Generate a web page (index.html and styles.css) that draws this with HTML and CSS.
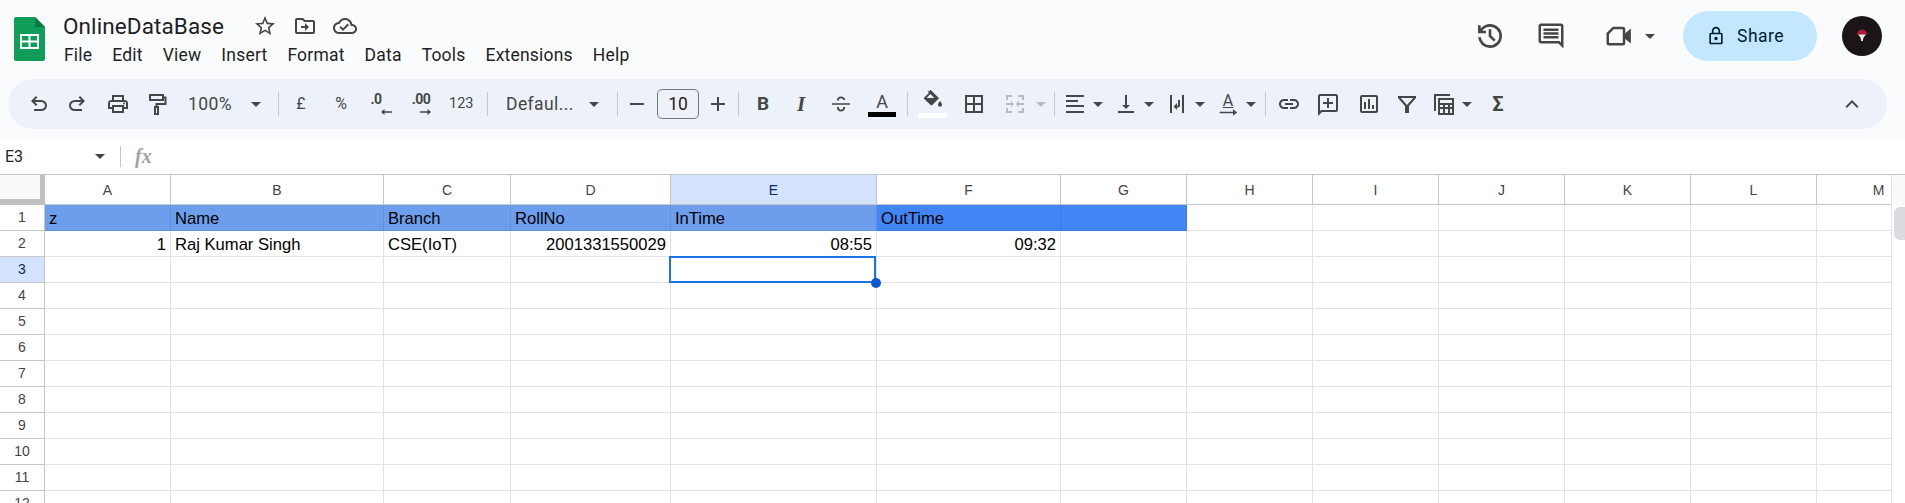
FILE: index.html
```html
<!DOCTYPE html>
<html lang="en">
<head>
<meta charset="utf-8">
<title>OnlineDataBase - Google Sheets</title>
<link rel="stylesheet" href="styles.css">
</head>
<body>
<div class="chrome">
  <header class="top">
    <svg class="logo" viewBox="0 0 31 44"><path class="logo-body" d="M2 0h19l10 10v32a2 2 0 0 1-2 2H2a2 2 0 0 1-2-2V2a2 2 0 0 1 2-2z"/><path class="logo-fold" d="M21 0l10 10H21z"/><path class="logo-grid" d="M6 17h19v15H6zm2 2v4.500h6.500V19zm8.500 0v4.500H23V19zM8 25.500V30h6.500v-4.500zm8.500 0V30H23v-4.500z"/></svg>
    <div class="doc">
      <div class="title-row">
        <span class="title">OnlineDataBase</span>
        <svg class="ic g28" viewBox="0 0 24 24"><path d="M22 9.240l-7.190-.620L12 2 9.190 8.630 2 9.240l5.460 4.730L5.820 21 12 17.270 18.180 21l-1.630-7.030L22 9.240zM12 15.400l-3.760 2.270 1-4.280-3.320-2.880 4.380-.380L12 6.100l1.710 4.040 4.380.380-3.320 2.880 1 4.280L12 15.400z"/></svg>
        <svg class="ic g16" viewBox="0 0 24 24"><path d="M20 6h-8l-2-2H4c-1.100 0-1.990.900-1.990 2L2 18c0 1.100.900 2 2 2h16c1.100 0 2-.900 2-2V8c0-1.100-.900-2-2-2zm0 12H4V6h5.170l2 2H20v10zm-8-4H8v-2h4V9l4 4-4 4v-3z"/></svg>
        <svg class="ic g16" viewBox="0 0 24 24"><path d="M19.350 10.040C18.670 6.590 15.640 4 12 4 9.110 4 6.600 5.640 5.350 8.040 2.340 8.360 0 10.910 0 14c0 3.310 2.690 6 6 6h13c2.760 0 5-2.240 5-5 0-2.640-2.050-4.780-4.650-4.960zM19 18H6c-2.210 0-4-1.790-4-4 0-2.050 1.530-3.760 3.560-3.970l1.070-.110.500-.950C8.080 7.140 9.940 6 12 6c2.620 0 4.880 1.860 5.390 4.430l.300 1.500 1.530.110c1.560.100 2.780 1.410 2.780 2.960 0 1.650-1.350 3-3 3zm-9-3.820l-2.090-2.090L6.500 13.500 10 17l6.010-6.010-1.410-1.410z"/></svg>
      </div>
      <nav class="menu"><span>File</span><span>Edit</span><span>View</span><span>Insert</span><span>Format</span><span>Data</span><span>Tools</span><span>Extensions</span><span>Help</span></nav>
    </div>
    <div class="actions">
      <svg class="big" viewBox="0 0 24 24"><path d="M12 21q-3.450 0-6.012-2.288T3.050 13h2.050q.350 2.600 2.313 4.300T12 19q2.925 0 4.963-2.037T19 12q0-2.925-2.037-4.963T12 5q-1.725 0-3.225.800T6.250 8H9v2H3V4h2v2.350q1.275-1.600 3.113-2.475T12 3q3.750 0 6.375 2.625T21 12q0 3.750-2.625 6.375T12 21Zm2.800-4.800L11 12.400V7h2v4.600l3.200 3.200-1.400 1.400Z"/></svg>
      <svg class="mid g30" viewBox="0 0 24 24"><path d="M21.990 4c0-1.100-.890-2-1.990-2H4c-1.100 0-2 .900-2 2v12c0 1.100.900 2 2 2h14l4 4-.010-18zM20 4v13.170L18.830 16H4V4h16zM6 12h12v2H6zm0-3h12v2H6zm0-3h12v2H6z"/></svg>
      <svg class="mid g38" viewBox="0 0 24 24"><path class="stroke" d="M7.500 5.500H15a1 1 0 0 1 1 1v11a1 1 0 0 1-1 1H4a1 1 0 0 1-1-1V10z"/><path d="M16 10.500l5.500-4.500v12L16 13.500z"/></svg>
      <span class="caret g10"></span>
      <div class="share g27">
        <svg class="lock" viewBox="0 0 24 24"><path d="M18 8h-1V6c0-2.760-2.240-5-5-5S7 3.240 7 6v2H6c-1.100 0-2 .900-2 2v10c0 1.100.900 2 2 2h12c1.100 0 2-.900 2-2V10c0-1.100-.900-2-2-2zM9 6c0-1.660 1.340-3 3-3s3 1.340 3 3v2H9V6zm9 14H6V10h12v10zm-6-3c1.100 0 2-.900 2-2s-.900-2-2-2-2 .900-2 2 .900 2 2 2z"/></svg>
        <span>Share</span>
      </div>
      <svg class="avatar g25" viewBox="0 0 40 40"><circle cx="20" cy="20" r="20" fill="#1b1418"/><path d="M15 18.500a5 5 0 0 1 10 0z" fill="#b3173c"/><path d="M16 18.500h8l-2.500 3-.7 3.500h-1.600l-.7-3.500z" fill="#f3ece6"/></svg>
    </div>
  </header>

  <div class="toolbar">
    <svg class="ti" viewBox="0 0 24 24"><path d="M7 19v-2h7.100q1.575 0 2.737-1T18 13.500q0-1.500-1.163-2.500T14.100 10H7.800l2.600 2.600L9 14 4 9l5-5 1.400 1.400L7.800 8h6.300q2.425 0 4.163 1.575T20 13.500q0 2.350-1.737 3.925T14.100 19H7Z"/></svg>
    <svg class="ti g14 flip" viewBox="0 0 24 24"><path d="M7 19v-2h7.100q1.575 0 2.737-1T18 13.500q0-1.500-1.163-2.500T14.100 10H7.800l2.600 2.600L9 14 4 9l5-5 1.400 1.400L7.800 8h6.300q2.425 0 4.163 1.575T20 13.500q0 2.350-1.737 3.925T14.100 19H7Z"/></svg>
    <svg class="ti g17" viewBox="0 0 24 24"><path d="M19 8h-1V3H6v5H5c-1.660 0-3 1.340-3 3v6h4v4h12v-4h4v-6c0-1.660-1.340-3-3-3zM8 5h8v3H8V5zm8 12v2H8v-4h8v2zm2-2v-2H6v2H4v-4c0-.550.450-1 1-1h14c.550 0 1 .450 1 1v4h-2z"/><circle cx="18" cy="11.500" r="1"/></svg>
    <svg class="ti g15" viewBox="0 0 24 24"><path class="stroke" d="M5 3h13v5H5zM18 5.500h2.500V12H11.500v3M10 15h3v7h-3z"/></svg>
    <span class="tt zoom g19">100%</span>
    <span class="caret g16"></span>
    <span class="sep g16"></span>
    <span class="tx g10">£</span>
    <span class="tx pct g16">%</span>
    <span class="dec g16"><b class="dec-one">.0</b><svg viewBox="0 0 12 8"><path d="M12 3.200H4.500V1L1 4l3.500 3V4.800H12z"/></svg></span>
    <span class="dec g16"><b>.00</b><svg viewBox="0 0 12 8"><path d="M0 3.200h7.500V1L11 4 7.500 7V4.800H0z"/></svg></span>
    <span class="tx num g16">123</span>
    <span class="sep g14"></span>
    <span class="tt font g18">Defaul...</span>
    <span class="caret g16"></span>
    <span class="sep g17"></span>
    <svg class="ti g7" viewBox="0 0 24 24"><path d="M5 11h14v2H5z"/></svg>
    <span class="size g8">10</span>
    <svg class="ti g7" viewBox="0 0 24 24"><path d="M5 11h6V5h2v6h6v2h-6v6h-2v-6H5z"/></svg>
    <span class="sep g8"></span>
    <span class="tx bold g12">B</span>
    <span class="tx ital g14">I</span>
    <svg class="ti g16" viewBox="0 0 24 24"><path d="M3 11.200h18v1.600H3zM7.800 8.500C8 6 9.800 4.500 12 4.500s4 1.200 4.300 3.500h-2c-.2-1-1.100-1.700-2.300-1.700S9.900 7 9.800 8.500zM7.800 15h2c.1 1.500 1 2.700 2.200 2.700s2.100-1 2.200-2.700h2c-.2 3-2 4.500-4.200 4.500S8 18 7.800 15z"/></svg>
    <span class="color g17">A<i class="bar-black"></i></span>
    <span class="sep g13"></span>
    <span class="fill g12"><svg viewBox="0 0 24 20"><path d="M9.500 1l1.200-1.100 8.300 8.300-6.500 6.500a1.500 1.500 0 0 1-2.100 0L4.500 9.300a1.500 1.500 0 0 1 0-2.100L9 2.800 7.500 1.300zM10.400 4.100L6.600 8h7.700z"/><path d="M20 11s2 2.300 2 3.700a2 2 0 0 1-4 0c0-1.400 2-3.700 2-3.700z"/></svg><i class="bar-white"></i></span>
    <svg class="ti g18" viewBox="0 0 24 24"><path d="M3 3h18v18H3zm2 2v6h6V5zm8 0v6h6V5zM5 13v6h6v-6zm8 0v6h6v-6z"/></svg>
    <svg class="ti g17 off" viewBox="0 0 24 24"><path d="M3 3h6v2H5v3H3zM15 3h6v5h-2V5h-4zM3 16h2v3h4v2H3zM19 16h2v5h-6v-2h4zM3 11h5V9l3 3-3 3v-2H3zM21 11h-5V9l-3 3 3 3v-2h5z"/></svg>
    <span class="caret off-caret g8"></span>
    <span class="sep g7"></span>
    <svg class="ti g8" viewBox="0 0 24 24"><path d="M3 3h18v2H3zM3 8h12v2H3zM3 13h18v2H3zM3 19h18v2H3z"/></svg>
    <span class="caret g5"></span>
    <svg class="ti g10" viewBox="0 0 24 24"><path d="M4 19h16v2H4zM11 3h2v10h3l-4 4-4-4h3z"/></svg>
    <span class="caret g5"></span>
    <svg class="ti g10" viewBox="0 0 24 24"><path d="M5 3h2v18H5zM17 3h2v18h-2zM15 8v5.500a2 2 0 0 1-2 2h-1V18l-3.500-3.500L12 11v2.500h1V8z"/></svg>
    <span class="caret g5"></span>
    <span class="rot g10">A<svg viewBox="0 0 24 8"><path d="M2 3h16V0l5 4-5 4V5H2z"/></svg></span>
    <span class="caret g5"></span>
    <span class="sep g8"></span>
    <svg class="ti g11" viewBox="0 0 24 24"><path d="M17 7h-4v2h4c1.650 0 3 1.350 3 3s-1.350 3-3 3h-4v2h4c2.760 0 5-2.240 5-5s-2.240-5-5-5zm-6 8H7c-1.650 0-3-1.350-3-3s1.350-3 3-3h4V7H7c-2.760 0-5 2.240-5 5s2.240 5 5 5h4v-2zm-3-4h8v2H8z"/></svg>
    <svg class="ti g15" viewBox="0 0 24 24"><path d="M2 4a2 2 0 0 1 2-2h16a2 2 0 0 1 2 2v14a2 2 0 0 1-2 2H6l-4 4zm2 0v15l1.200-1H20V4zM11 6h2v4h4v2h-4v4h-2v-4H7v-2h4z"/></svg>
    <svg class="ti g17" viewBox="0 0 24 24"><path d="M5 3h14a2 2 0 0 1 2 2v14a2 2 0 0 1-2 2H5a2 2 0 0 1-2-2V5a2 2 0 0 1 2-2zm0 2v14h14V5zM7 10h2v7H7zM11 7h2v10h-2zM15 13h2v4h-2z"/></svg>
    <svg class="ti g14" viewBox="0 0 24 24"><path d="M3 4h18v2l-7 8v7h-4v-7L3 6zm2.800 2l6.200 7 6.200-7z"/></svg>
    <svg class="ti g13" viewBox="0 0 24 24"><path d="M2 2h16v2H4v15H2zM6 6h16v17H6zm2 2v3h12V8zm0 5v2h3v-2zm5 0v2h3v-2zm5 0v2h2v-2zM8 17v4h3v-4zm5 0v4h3v-4zm5 0v4h2v-4z"/></svg>
    <span class="caret g5"></span>
    <span class="tx sigma g13">Σ</span>
    <svg class="ti chev" viewBox="0 0 24 24"><path d="M12 8l-6.500 6.500 1.400 1.400L12 10.800l5.100 5.100 1.400-1.400z"/></svg>
  </div>
</div>

<div class="formula">
  <span class="namebox">E3</span>
  <span class="caret"></span>
  <span class="fsep"></span>
  <span class="fx">fx</span>
</div>

<div class="sheet">
  <table class="grid">
    <colgroup><col class="c-rh"><col class="c-a"><col class="c-b"><col class="c-c"><col class="c-d"><col class="c-e"><col class="c-f"><col class="c-g"><col class="c-n"><col class="c-n"><col class="c-n"><col class="c-n"><col class="c-n"><col class="c-m"></colgroup>
    <tr class="heads"><th class="corner"></th><th>A</th><th>B</th><th>C</th><th>D</th><th class="on">E</th><th>F</th><th>G</th><th>H</th><th>I</th><th>J</th><th>K</th><th>L</th><th class="m">M</th></tr>
    <tr class="band"><th>1</th><td>z</td><td>Name</td><td>Branch</td><td>RollNo</td><td>InTime</td><td class="deep">OutTime</td><td class="deep"></td><td></td><td></td><td></td><td></td><td></td><td></td></tr>
    <tr><th>2</th><td class="r">1</td><td>Raj Kumar Singh</td><td>CSE(IoT)</td><td class="r">2001331550029</td><td class="r">08:55</td><td class="r">09:32</td><td></td><td></td><td></td><td></td><td></td><td></td><td></td></tr>
    <tr><th class="on">3</th><td></td><td></td><td></td><td></td><td class="sel"></td><td></td><td></td><td></td><td></td><td></td><td></td><td></td><td></td></tr>
    <tr><th>4</th><td></td><td></td><td></td><td></td><td></td><td></td><td></td><td></td><td></td><td></td><td></td><td></td><td></td></tr>
    <tr><th>5</th><td></td><td></td><td></td><td></td><td></td><td></td><td></td><td></td><td></td><td></td><td></td><td></td><td></td></tr>
    <tr><th>6</th><td></td><td></td><td></td><td></td><td></td><td></td><td></td><td></td><td></td><td></td><td></td><td></td><td></td></tr>
    <tr><th>7</th><td></td><td></td><td></td><td></td><td></td><td></td><td></td><td></td><td></td><td></td><td></td><td></td><td></td></tr>
    <tr><th>8</th><td></td><td></td><td></td><td></td><td></td><td></td><td></td><td></td><td></td><td></td><td></td><td></td><td></td></tr>
    <tr><th>9</th><td></td><td></td><td></td><td></td><td></td><td></td><td></td><td></td><td></td><td></td><td></td><td></td><td></td></tr>
    <tr><th>10</th><td></td><td></td><td></td><td></td><td></td><td></td><td></td><td></td><td></td><td></td><td></td><td></td><td></td></tr>
    <tr><th>11</th><td></td><td></td><td></td><td></td><td></td><td></td><td></td><td></td><td></td><td></td><td></td><td></td><td></td></tr>
    <tr><th>12</th><td></td><td></td><td></td><td></td><td></td><td></td><td></td><td></td><td></td><td></td><td></td><td></td><td></td></tr>
  </table>
  <aside class="vscroll"><div class="vhead"></div><div class="thumb"></div></aside>
</div>
</body>
</html>
```

FILE: styles.css
```css
* { box-sizing: border-box; }
html, body { margin: 0; height: 503px; overflow: hidden; background: #fff; }
body { font-family: Roboto, "Liberation Sans", sans-serif; color: #1f1f1f; }
svg { display: block; fill: currentColor; flex: none; }
.stroke { fill: none; stroke: currentColor; stroke-width: 2; }

.g1 { margin-left: 1px; } .g5 { margin-left: 5px; } .g7 { margin-left: 7px; } .g8 { margin-left: 8px; }
.g10 { margin-left: 10px; } .g11 { margin-left: 11px; } .g12 { margin-left: 12px; } .g13 { margin-left: 13px; }
.g14 { margin-left: 14px; } .g15 { margin-left: 15px; } .g16 { margin-left: 16px; } .g17 { margin-left: 17px; }
.g18 { margin-left: 18px; } .g19 { margin-left: 19px; } .g25 { margin-left: 25px; } .g27 { margin-left: 27px; }
.g28 { margin-left: 28px; } .g30 { margin-left: 30px; } .g38 { margin-left: 38px; }

.chrome { height: 139px; background: #f9fbfd; padding-bottom: 10px; }
.top { display: flex; align-items: flex-start; height: 79px; padding: 0 23px 0 14px; }
.logo { width: 31px; height: 44px; margin: 17px 19px 0 0; }
.logo-body { fill: #0f9d58; }
.logo-fold { fill: #0a7a43; }
.logo-grid { fill: #fff; }
.doc { padding-top: 12px; }
.title-row { display: flex; align-items: center; height: 28px; }
.title { font-size: 22.500px; line-height: 28px; width: 162px; margin-left: -1px; letter-spacing: .1px; white-space: nowrap; color: #1f1f1f; }
.ic { width: 24px; height: 24px; color: #444746; }
.menu { display: flex; gap: 20px; margin-top: 4px; font-size: 17.500px; line-height: 22px; letter-spacing: .2px; color: #1f1f1f; }
.actions { display: flex; align-items: center; height: 50px; margin: 11px 0 0 auto; color: #444746; }
.big { width: 32px; height: 32px; }
.mid { width: 30px; height: 30px; }
.caret { flex: none; width: 12px; height: 5px; display: block; position: relative; }
.caret::before { content: ""; position: absolute; left: 1px; top: 0; border-style: solid; border-width: 5px 5px 0; border-color: #444746 transparent transparent; }
.off-caret::before { border-top-color: #b8babb; }
.share { display: flex; align-items: center; width: 134px; height: 50px; padding-left: 23px; border-radius: 25px; background: #c2e7ff; color: #001d35; font-size: 17.500px; letter-spacing: .5px; }
.lock { width: 20px; height: 20px; margin-right: 11px; }
.avatar { width: 40px; height: 40px; }

.toolbar { display: flex; align-items: center; height: 50px; margin: 0 18px 0 8px; padding: 0 23px 0 19px; border-radius: 25px; background: #edf2fa; color: #444746; }
.ti { width: 24px; height: 24px; }
.flip { transform: scaleX(-1); }
.off { color: #b8babb; }
.sep { flex: none; width: 1px; height: 24px; background: #c7c7c7; }
.tt { flex: none; font-size: 17.500px; letter-spacing: .4px; white-space: nowrap; color: #444746; }
.zoom { width: 46px; }
.font { width: 66px; }
.tx { flex: none; width: 24px; text-align: center; font-size: 16px; line-height: 24px; color: #444746; }
.pct { font-size: 16px; }
.num { font-size: 14.500px; }
.bold { font-weight: 700; font-size: 19px; }
.ital { font-family: "Liberation Serif", serif; font-style: italic; font-weight: 700; font-size: 21px; }
.sigma { font-weight: 700; font-size: 20px; }
.dec { flex: none; width: 24px; height: 30px; padding-top: 2px; display: flex; flex-direction: column; align-items: center; }
.dec b { font-size: 14px; line-height: 17px; font-weight: 700; letter-spacing: -.5px; white-space: nowrap; }
.dec .dec-one { margin-right: 10px; }
.dec svg { width: 12px; height: 8px; margin-left: 9px; }
.size { flex: none; width: 42px; height: 30px; border: 1px solid #747775; border-radius: 5px; text-align: center; font-size: 17.500px; line-height: 28px; color: #1f1f1f; }
.color { flex: none; width: 24px; height: 30px; text-align: center; font-size: 18px; line-height: 26px; display: flex; flex-direction: column; align-items: center; }
.bar-black { display: block; width: 28px; height: 5px; margin-top: -3px; background: #000; flex: none; }
.fill { flex: none; width: 24px; height: 30px; display: flex; flex-direction: column; align-items: center; padding-top: 1px; }
.fill svg { width: 24px; height: 20px; }
.bar-white { display: block; width: 29px; height: 5px; margin-top: 3px; background: #fff; flex: none; }
.rot { flex: none; width: 24px; height: 24px; display: flex; flex-direction: column; align-items: center; font-size: 16px; line-height: 17px; text-decoration: underline; text-underline-offset: 1px; }
.rot svg { width: 20px; height: 7px; }
.chev { margin-left: auto; }

.formula { display: flex; align-items: center; height: 35px; background: #fff; padding-left: 5px; color: #1f1f1f; }
.namebox { width: 89px; font-size: 16px; }
.formula .caret { width: 12px; }
.fsep { width: 1px; height: 21px; margin-left: 14px; background: #c7c7c7; }
.fx { margin-left: 14px; font-family: "Liberation Serif", serif; font-style: italic; font-weight: 700; font-size: 20px; color: #a0a3a6; }

.sheet { display: flex; height: 329px; overflow: hidden; }
.grid { table-layout: fixed; width: 1892px; flex: none; border-collapse: separate; border-spacing: 0; font-family: "Liberation Sans", Arial, sans-serif; align-self: flex-start; }
.c-rh { width: 45px; } .c-a { width: 126px; } .c-b { width: 213px; } .c-c { width: 127px; }
.c-d { width: 160px; } .c-e { width: 206px; } .c-f { width: 184px; } .c-g { width: 126px; }
.c-n { width: 126px; } .c-m { width: 75px; }
tr { height: 26px; }
.grid td { height: 26px; padding: 0 4px 1px 4px; vertical-align: bottom; font-size: 16.600px; line-height: 20px; white-space: nowrap; color: #000; border-right: 1px solid #e2e3e3; border-bottom: 1px solid #e2e3e3; }
.grid th { height: 26px; padding: 0 0 2px; font-size: 14px; font-weight: 400; color: #444; background: #fff; border-right: 1px solid #c7c7c7; border-bottom: 1px solid #c7c7c7; }
.grid tr:first-child th { border-top: 1px solid #c7c7c7; height: 31px; padding: 0; }
.heads { height: 31px; }
.grid th.corner { background: #f8f9fa; border-right: 5px solid #c0c0c0; border-bottom: 6px solid #c0c0c0; }
.grid th.on { background: #d3e3fd; color: #0b2a5b; }
.grid tr:first-child th.m { padding-left: 49px; border-right: 1px solid #e2e3e3; }
.r { text-align: right; }
.grid .band td:nth-child(-n+6) { background: #6d9eeb; border-right-color: #5f90de; border-bottom-color: #5f90de; }
.grid .band td.deep { background: #4285f4; border-right-color: #3b7be6; border-bottom-color: #3b7be6; }
.grid td.sel { position: relative; }
.sel::after { content: ""; position: absolute; left: -2px; right: 0; top: -1px; bottom: -1px; border: 2px solid #1a73e8; }
.sel::before { content: ""; position: absolute; right: -5px; bottom: -6px; width: 10px; height: 10px; border-radius: 50%; background: #0b57d0; z-index: 1; }

.vscroll { flex: 1; position: relative; background: #fff; }
.vhead { height: 31px; background: #f8f9fa; border-top: 1px solid #c7c7c7; }
.thumb { height: 33px; margin: 2px 0 0 2px; background: #dadce0; border-radius: 6px 0 0 6px; }
```
